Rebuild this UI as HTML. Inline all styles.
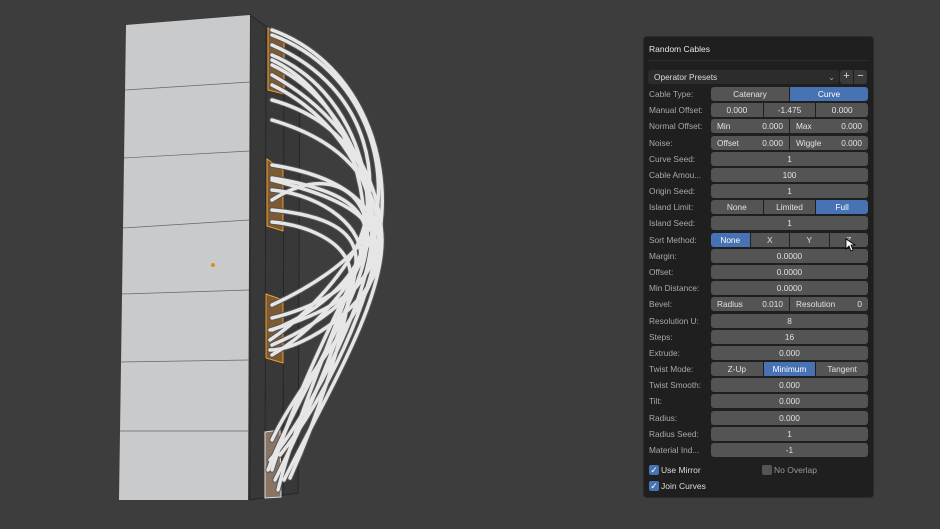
<!DOCTYPE html>
<html><head><meta charset="utf-8"><style>
*{box-sizing:border-box;margin:0;padding:0}
body{width:940px;height:529px;background:#3d3d3d;font-family:"Liberation Sans",sans-serif;position:relative;overflow:hidden}
#panel{position:absolute;left:643px;top:36px;width:231px;height:462px;background:#1f1f1f;border-radius:4px;border:1px solid #2a2a2a}
.t{position:absolute;font-size:8.5px;color:#ddd}
.lab{position:absolute;left:5px;font-size:8.3px;color:#a9a9a9;white-space:nowrap}
.f{position:absolute;left:67px;width:157px;height:14px;display:flex;gap:1px}
.f div{flex:1;background:#545454;color:#e2e2e2;font-size:8.3px;line-height:14px;text-align:center;white-space:nowrap;display:flex;justify-content:center;padding:0 6px}
.f div:first-child{border-radius:3px 0 0 3px}.f div:last-child{border-radius:0 3px 3px 0}
.f div:only-child{border-radius:3px}
.f div.b{background:#4772b3;color:#fff}
.f div.sp{justify-content:space-between}
.cb{position:absolute;width:10px;height:10px;border-radius:2px;background:#4772b3;color:#fff;font-size:9px;line-height:10px;text-align:center}
</style></head><body>
<svg width="940" height="529" style="position:absolute;left:0;top:0">
<polygon points="250,15 300,50 298,493 250,500" fill="#383838" stroke="#262626"/>
<line x1="266" y1="28" x2="265" y2="498" stroke="#262626"/>
<line x1="284" y1="40" x2="283" y2="496" stroke="#262626"/>
<polygon points="126,25 250,15 248,500 119,500" fill="#c9cacb"/>
<g stroke="#666" stroke-width="0.7">
<line x1="125" y1="90" x2="250" y2="82"/><line x1="124" y1="158" x2="250" y2="151"/>
<line x1="123" y1="228" x2="249" y2="220"/><line x1="122" y1="294" x2="249" y2="290"/>
<line x1="121" y1="362" x2="249" y2="360"/><line x1="120" y1="431" x2="248" y2="431"/>
</g>
<circle cx="213" cy="265" r="2" fill="#e08a20"/>
<g fill="#8a6030" fill-opacity="0.85" stroke="#f0a030">
<polygon points="268,28 284,42 284,94 268,90"/>
<polygon points="267,159 283,170 283,231 267,226"/>
<polygon points="266,294 283,300 283,363 266,358"/>
</g>
<polygon points="265,432 280,430 281,497 265,498" fill="#8a7464" stroke="#ddd"/>
<defs><g id="cab">
<path d="M272,35 C365,70 395,170 370,240 C345,300 300,380 272,470"/>
<path d="M272,45 C375,90 385,190 355,250 C325,300 285,330 270,340"/>
<path d="M272,55 C355,90 380,190 362,250 C348,300 295,420 278,490"/>
<path d="M272,65 C345,100 372,180 372,230 C372,300 305,420 270,460"/>
<path d="M272,75 C335,110 380,170 382,240 C382,300 335,380 284,480"/>
<path d="M272,85 C345,120 385,200 372,260 C360,300 305,320 270,330"/>
<path d="M272,165 C335,175 378,200 380,250 C380,300 305,350 270,350"/>
<path d="M272,178 C345,190 372,210 366,250 C360,300 295,400 268,470"/>
<path d="M272,190 C325,195 366,230 360,260 C354,290 305,310 272,318"/>
<path d="M272,210 C325,215 356,230 356,260 C356,300 315,400 275,480"/>
<path d="M272,222 C305,225 345,240 350,270 C355,300 325,400 290,478"/>
<path d="M272,30 C355,60 392,150 380,230 C372,300 325,400 280,455"/>
<path d="M272,305 C305,290 356,260 368,230 C382,180 345,120 272,100"/>
<path d="M272,355 C315,330 356,280 366,250 C376,200 335,160 272,200"/>
<path d="M272,330 C325,310 362,270 364,240 C368,170 335,90 272,60"/>
<path d="M272,345 C330,320 375,280 378,240 C380,180 340,140 272,120"/>
<path d="M272,440 C300,380 360,320 375,270 C385,220 350,200 272,180"/>
</g></defs>
<g fill="none" stroke-linecap="round">
<use href="#cab" stroke="#555" stroke-width="5.5"/>
<use href="#cab" stroke="#e6e6e6" stroke-width="3.5"/>
</g>
</svg>
<div id="panel">
<div class="t" style="left:5px;top:7px;font-size:8.5px;color:#e8e8e8">Random Cables</div>
<div style="position:absolute;left:4px;right:4px;top:23px;height:1px;background:#2c2c2c"></div>
<div style="position:absolute;left:4px;top:33px;width:191px;height:14px;background:#2c2c2c;border-radius:3px;color:#ddd;font-size:8.3px;line-height:14px;padding-left:6px">Operator Presets<span style="position:absolute;right:4px;color:#aaa">⌄</span></div>
<div style="position:absolute;left:196px;top:33px;width:13px;height:14px;background:#3a3a3a;border-radius:3px 0 0 3px;color:#ddd;font-size:11px;line-height:13px;text-align:center">+</div>
<div style="position:absolute;left:210px;top:33px;width:13px;height:14px;background:#3a3a3a;border-radius:0 3px 3px 0;color:#ddd;font-size:11px;line-height:13px;text-align:center">−</div>
<div id="rows"></div>
<div class="cb" style="left:5px;top:428px">✓</div><div class="t" style="left:17px;top:428px">Use Mirror</div>
<div class="cb" style="left:118px;top:428px;background:#545454"></div><div class="t" style="left:130px;top:428px;color:#999">No Overlap</div>
<div class="cb" style="left:5px;top:444px">✓</div><div class="t" style="left:17px;top:444px">Join Curves</div>
</div>
<script>
var R=[["Cable Type:",["Catenary","b:Curve"]],["Manual Offset:",["0.000","-1.475","0.000"]],["Normal Offset:",["s:Min|0.000","s:Max|0.000"]],["Noise:",["s:Offset|0.000","s:Wiggle|0.000"]],["Curve Seed:",["1"]],["Cable Amou...",["100"]],["Origin Seed:",["1"]],["Island Limit:",["None","Limited","b:Full"]],["Island Seed:",["1"]],["Sort Method:",["b:None","X","Y","Z"]],["Margin:",["0.0000"]],["Offset:",["0.0000"]],["Min Distance:",["0.0000"]],["Bevel:",["s:Radius|0.010","s:Resolution|0"]],["Resolution U:",["8"]],["Steps:",["16"]],["Extrude:",["0.000"]],["Twist Mode:",["Z-Up","b:Minimum","Tangent"]],["Twist Smooth:",["0.000"]],["Tilt:",["0.000"]],["Radius:",["0.000"]],["Radius Seed:",["1"]],["Material Ind...",["-1"]]];
var h="";R.forEach(function(r,i){var y=Math.round(50+i*16.18);h+='<div class="lab" style="top:'+(y+2)+'px">'+r[0]+'</div><div class="f" style="top:'+y+'px">';r[1].forEach(function(c){if(c.indexOf("b:")==0)h+='<div class="b">'+c.slice(2)+'</div>';else if(c.indexOf("s:")==0){var p=c.slice(2).split("|");h+='<div class="sp"><span>'+p[0]+'</span><span>'+p[1]+'</span></div>';}else h+='<div>'+c+'</div>';});h+='</div>';});
document.getElementById("rows").innerHTML=h;
</script>
<svg width="12" height="14" style="position:absolute;left:845px;top:238px"><path d="M1,1 L1,11 L4,8 L6,13 L8,12 L6,7 L10,7 Z" fill="#fff" stroke="#000" stroke-width="0.8"/></svg>
</body></html>
